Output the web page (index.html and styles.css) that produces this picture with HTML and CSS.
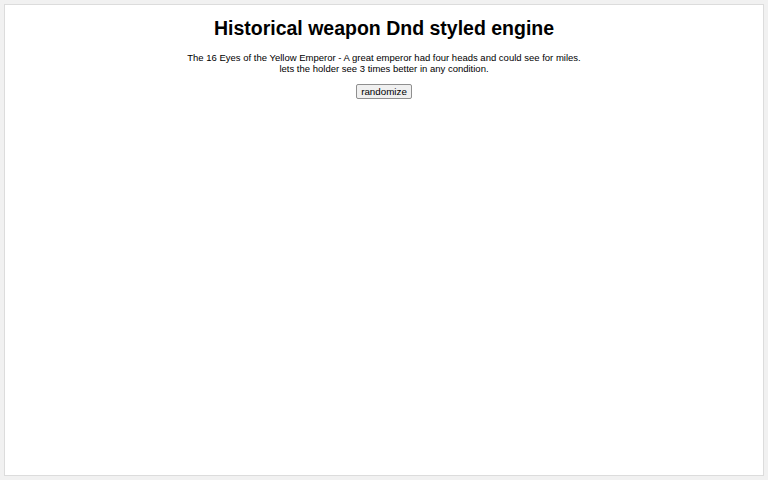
FILE: index.html
```html
<!DOCTYPE html>
<html lang="en">

<head>
  <meta charset="UTF-8">
  <meta name="viewport" content="width=device-width, initial-scale=1.0">
  <title>Historical weapon Dnd styled engine</title>
  <link rel="stylesheet" href="styles.css">
</head>

<body>
  <div class="page">
    <h1 class="title">Historical weapon Dnd styled engine</h1>
    <p class="weapon">The 16 Eyes of the Yellow Emperor - A great emperor had four heads and could see for miles.<br>lets the holder see 3 times better in any condition.</p>
    <button class="roll">randomize</button>
  </div>
</body>

</html>
```

FILE: styles.css
```css
body {
  margin: 0;
  padding: 4px 4px 0 4px;
  background: #f1f1f1;
  font-family: "Liberation Sans", Arial, sans-serif;
}

.page {
  height: 470px;
  border: 1px solid #dcdcdc;
  background: #fff;
  text-align: center;
}

.title {
  margin: 0;
  padding-top: 12px;
  font-size: 19.5px;
  line-height: 22px;
  color: #000;
}

.weapon {
  margin: 13px 0 7px;
  font-size: 9.5px;
  line-height: 11px;
  color: #000;
}

.roll {
  padding: 1px 4px;
  font-family: "Liberation Sans", Arial, sans-serif;
  font-size: 9.8px;
  line-height: 11px;
  color: #000;
  background: #f0f0f0;
  border: 1px solid #8f8f8f;
  border-radius: 2px;
}
```
